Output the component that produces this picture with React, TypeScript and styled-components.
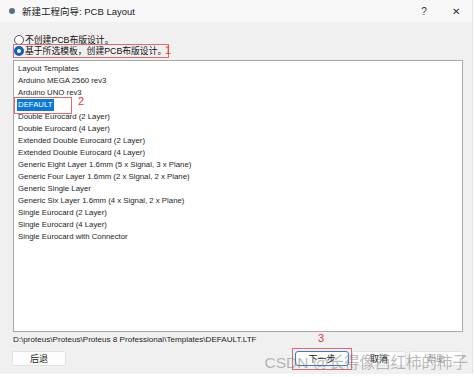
import React, { useState } from "react";
import styled, { createGlobalStyle } from "styled-components";

const GlobalStyle = createGlobalStyle`
  html, body {
    margin: 0;
    padding: 0;
    background: #ffffff;
  }
  body {
    font-family: "Liberation Sans", "Noto Sans CJK SC", sans-serif;
  }
`;

const Window = styled.div`
  width: 472px;
  height: 374px;
  background: #f0f0f0;
  display: flex;
  flex-direction: column;
  position: relative;
  overflow: hidden;
  border-right: 1px solid #e2e2e2;
`;

const TitleBar = styled.div`
  height: 22px;
  background: #f8f8f8;
  display: flex;
  align-items: center;
  padding: 0 0 0 9px;
  font-size: 9.5px;
  color: #1a1a1a;
`;

const AppIcon = styled.span`
  width: 6px;
  height: 6px;
  border-radius: 50%;
  background: #5a6e86;
  margin-right: 7px;
`;

const TitleText = styled.span`
  flex: 1;
`;

const TitleButton = styled.span`
  width: 32px;
  text-align: center;
  font-size: 10px;
  color: #333;
`;

const Body = styled.div`
  flex: 1;
  display: flex;
  flex-direction: column;
  padding: 12px 9px 0 13px;
`;

const RadioRow = styled.label`
  display: flex;
  align-items: center;
  height: 11px;
  font-size: 8.8px;
  color: #111;
  position: relative;
  width: fit-content;
  padding-right: 2px;
`;

const RadioDot = styled.span<{ checked?: boolean }>`
  width: 10px;
  height: 10px;
  border-radius: 50%;
  box-sizing: border-box;
  margin: 0 1px 0 1px;
  border: ${(p) => (p.checked ? "3px solid #0a63b8" : "1px solid #555")};
  background: #fff;
`;

const Mark = styled.span`
  position: absolute;
  color: #e03a3a;
  font-size: 11px;
  line-height: 12px;
  font-family: "Liberation Sans", sans-serif;
`;

const RedBox = styled.div`
  position: absolute;
  border: 1px solid #e36a6a;
  pointer-events: none;
`;

const ListBox = styled.div`
  margin-top: 4px;
  height: 272px;
  background: #ffffff;
  border: 1px solid #a8a8a8;
  box-sizing: border-box;
  padding: 2px 0 0 3px;
  display: flex;
  flex-direction: column;
`;

const Item = styled.div<{ selected?: boolean }>`
  height: 12px;
  line-height: 12px;
  font-size: 7.8px;
  color: ${(p) => (p.selected ? "#ffffff" : "#1e1e1e")};
  background: ${(p) => (p.selected ? "#0a78d7" : "transparent")};
  width: fit-content;
  padding: 0 1px;
  position: relative;
  cursor: default;
`;

const PathText = styled.div`
  font-size: 8.1px;
  color: #1e1e1e;
  margin-top: 2px;
  height: 12px;
  line-height: 12px;
  position: relative;
`;

const ButtonRow = styled.div`
  display: flex;
  align-items: center;
  margin: 5px 0 0 -4px;
`;

const Button = styled.div<{ primary?: boolean; disabled?: boolean }>`
  width: 54px;
  height: 15px;
  box-sizing: border-box;
  display: flex;
  align-items: center;
  justify-content: center;
  font-size: 9px;
  background: #fdfdfd;
  border: 1px solid ${(p) => (p.primary ? "#2b7fd6" : "#e3e3e3")};
  border-radius: ${(p) => (p.primary ? "3px" : "2px")};
  color: ${(p) => (p.disabled ? "#a5a5a5" : "#1a1a1a")};
  margin-left: 3px;
  position: relative;
`;

const Spacer = styled.div`
  flex: 1;
`;

const Watermark = styled.div`
  position: absolute;
  right: 4px;
  bottom: 2px;
  font-size: 15.5px;
  color: rgba(120, 120, 120, 0.5);
  white-space: nowrap;
  pointer-events: none;
`;

const templates = [
  "Layout Templates",
  "Arduino MEGA 2560 rev3",
  "Arduino UNO rev3",
  "DEFAULT",
  "Double Eurocard (2 Layer)",
  "Double Eurocard (4 Layer)",
  "Extended Double Eurocard (2 Layer)",
  "Extended Double Eurocard (4 Layer)",
  "Generic Eight Layer 1.6mm (5 x Signal, 3 x Plane)",
  "Generic Four Layer 1.6mm (2 x Signal, 2 x Plane)",
  "Generic Single Layer",
  "Generic Six Layer 1.6mm (4 x Signal, 2 x Plane)",
  "Single Eurocard (2 Layer)",
  "Single Eurocard (4 Layer)",
  "Single Eurocard with Connector",
];

export default function App() {
  const [selected, setSelected] = useState("DEFAULT");
  return (
    <>
      <GlobalStyle />
      <Window>
        <TitleBar>
          <AppIcon />
          <TitleText>新建工程向导: PCB Layout</TitleText>
          <TitleButton>?</TitleButton>
          <TitleButton>✕</TitleButton>
        </TitleBar>
        <Body>
          <RadioRow>
            <RadioDot />
            不创建PCB布版设计。
          </RadioRow>
          <RadioRow>
            <RadioDot checked />
            基于所选模板，创建PCB布版设计。
            <RedBox style={{ left: "0px", top: "-1px", right: "-1px", bottom: "-2px" }} />
            <Mark style={{ left: "152px", top: "-1px" }}>1</Mark>
          </RadioRow>
          <ListBox>
            {templates.map((t) => (
              <Item
                key={t}
                selected={t === selected}
                onClick={() => setSelected(t)}
              >
                {t}
                {t === "DEFAULT" && (
                  <>
                    <RedBox style={{ left: "-3px", top: "-2px", width: "56px", height: "15px" }} />
                    <Mark style={{ left: "61px", top: "-4px" }}>2</Mark>
                  </>
                )}
              </Item>
            ))}
          </ListBox>
          <PathText>
            D:\proteus\Proteus\Proteus 8 Professional\Templates\{selected}.LTF
          </PathText>
          <ButtonRow>
            <Button>后退</Button>
            <Spacer />
            <Button primary>
              下一步
              <RedBox style={{ left: "-4px", top: "-4px", right: "-4px", bottom: "-5px" }} />
              <Mark style={{ left: "22px", top: "-20px" }}>3</Mark>
            </Button>
            <Button>取消</Button>
            <Button disabled>帮助</Button>
          </ButtonRow>
        </Body>
        <Watermark>CSDN @长得像西红柿的柿子</Watermark>
      </Window>
    </>
  );
}
